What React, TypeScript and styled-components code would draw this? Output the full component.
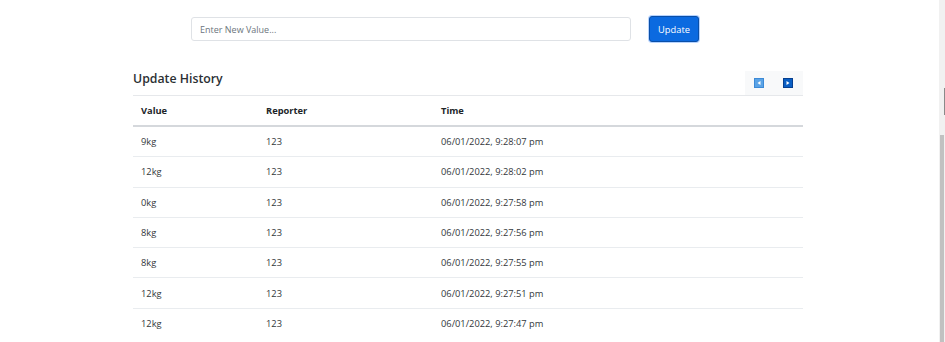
import React from 'react';
import styled, { createGlobalStyle } from 'styled-components';

const GlobalStyle = createGlobalStyle`
  html, body {
    margin: 0;
    padding: 0;
    background: #fff;
    overflow: hidden;
  }
  body {
    font-family: "Open Sans", "Noto Sans", sans-serif;
    color: #212529;
  }
`;

const rows = [
  { value: '9kg', reporter: '123', time: '06/01/2022, 9:28:07 pm' },
  { value: '12kg', reporter: '123', time: '06/01/2022, 9:28:02 pm' },
  { value: '0kg', reporter: '123', time: '06/01/2022, 9:27:58 pm' },
  { value: '8kg', reporter: '123', time: '06/01/2022, 9:27:56 pm' },
  { value: '8kg', reporter: '123', time: '06/01/2022, 9:27:55 pm' },
  { value: '12kg', reporter: '123', time: '06/01/2022, 9:27:51 pm' },
  { value: '12kg', reporter: '123', time: '06/01/2022, 9:27:47 pm' },
];

const ArrowButton = ({ dir, active }: { dir: 'left' | 'right'; active?: boolean }) => (
  <PageButton $active={active} aria-label={dir === 'left' ? 'Previous' : 'Next'}>
    <svg width="10" height="10" viewBox="0 0 10 10">
      {dir === 'left'
        ? <polygon points="6.5,3 3.5,5 6.5,7" fill="#fff" />
        : <polygon points="3.5,3 6.5,5 3.5,7" fill="#fff" />}
    </svg>
  </PageButton>
);

const App = () => (
  <>
    <GlobalStyle />
    <Screen>
      <Main>
        <Container>
          <Form onSubmit={(e) => e.preventDefault()}>
            <ValueInput placeholder="Enter New Value..." />
            <SubmitButton type="submit">Update</SubmitButton>
          </Form>

          <TitleRow>
            <Title>Update History</Title>
            <Pager>
              <ArrowButton dir="left" />
              <ArrowButton dir="right" active />
            </Pager>
          </TitleRow>

          <Table>
            <colgroup>
              <col style={{ width: 125 }} />
              <col style={{ width: 175 }} />
              <col />
            </colgroup>
            <thead>
              <tr>
                <Th>Value</Th>
                <Th>Reporter</Th>
                <Th>Time</Th>
              </tr>
            </thead>
            <tbody>
              {rows.map((r, i) => (
                <Tr key={i}>
                  <Td>{r.value}</Td>
                  <Td>{r.reporter}</Td>
                  <Td>{r.time}</Td>
                </Tr>
              ))}
            </tbody>
          </Table>
        </Container>
      </Main>
      <Scrollbar>
        <Track />
        <Thumb />
      </Scrollbar>
    </Screen>
  </>
);

const Screen = styled.div`
  display: flex;
  width: 945px;
  height: 342px;
  overflow: hidden;
`;

const Main = styled.main`
  flex: 1 1 auto;
`;

const Container = styled.div`
  width: 670px;
  margin-left: 133px;
  padding-top: 16px;
`;

const Form = styled.form`
  display: flex;
  align-items: center;
  margin-left: 58px;
  gap: 18px;
`;

const ValueInput = styled.input`
  box-sizing: border-box;
  width: 440px;
  height: 24px;
  border: 1px solid #dfe2e6;
  border-radius: 3px;
  padding: 0 8px;
  font-family: inherit;
  font-size: 9px;
  color: #212529;
  outline: none;

  &::placeholder {
    color: #6c757d;
  }
`;

const SubmitButton = styled.button`
  box-sizing: border-box;
  width: 50px;
  height: 26px;
  background: #0b6ae0;
  color: #fff;
  border: 1px solid #0a4fa8;
  border-radius: 3px;
  box-shadow: 0 0 0 1px rgba(13, 110, 253, 0.3);
  font-family: inherit;
  font-size: 9.3px;
  cursor: pointer;
`;

const TitleRow = styled.div`
  display: flex;
  align-items: flex-end;
  justify-content: space-between;
  margin-top: 25px;
  height: 28px;
`;

const Title = styled.h2`
  margin: 0 0 8px;
  font-size: 12.3px;
  font-weight: 600;
  line-height: 16px;
  color: #2b2f33;
`;

const Pager = styled.div`
  display: flex;
  align-items: center;
  gap: 19px;
  height: 24px;
  width: 58px;
  box-sizing: border-box;
  padding-left: 9px;
  background: #f8f9fa;
`;

const PageButton = styled.button<{ $active?: boolean }>`
  display: flex;
  padding: 0;
  width: 10px;
  height: 10px;
  border: 1px solid ${(p) => (p.$active ? '#063f8f' : '#3d8ad6')};
  background: ${(p) => (p.$active ? '#0a5fc4' : '#5aa3e6')};
  cursor: pointer;

  svg {
    margin: -1px;
  }
`;

const Table = styled.table`
  width: 100%;
  table-layout: fixed;
  border-collapse: collapse;
  font-size: 9.3px;
  border-top: 1px solid #e6e8eb;
`;

const Th = styled.th`
  text-align: left;
  font-weight: 700;
  padding: 0 8px;
  height: 29px;
  border-bottom: 2px solid #d5d8dc;
  color: #212529;
`;

const Tr = styled.tr`
  & + & td {
    border-top: 1px solid #e9ecef;
  }
`;

const Td = styled.td`
  padding: 0 8px;
  height: 29.3px;
  color: #33373b;
`;

const Scrollbar = styled.aside`
  flex: 0 0 6px;
  display: flex;
  flex-direction: column;
  background: #f1f1f1;
`;

const Track = styled.div`
  height: 135px;
  position: relative;

  &::after {
    content: '';
    position: absolute;
    right: 0;
    top: 88px;
    width: 1px;
    height: 27px;
    background: #8a8a8a;
  }
`;

const Thumb = styled.div`
  flex: 1;
  margin-left: 1px;
  margin-right: 1px;
  background: #c1c1c1;
`;

export default App;
